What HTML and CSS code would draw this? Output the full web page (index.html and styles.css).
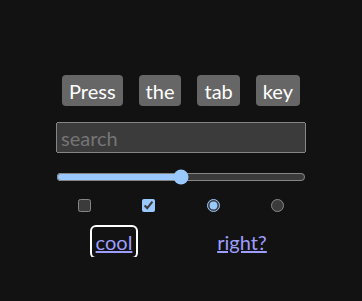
FILE: index.html
```html
<!DOCTYPE html>
<html lang="en">

<head>
    <meta charset="UTF-8">
    <meta name="viewport" content="width=device-width, initial-scale=1.0">
    <title>Tab order</title>
    <link rel="stylesheet" href="styles.css">
</head>

<body>
    <div class="page">
        <div class="keys">
            <button class="key">Press</button>
            <button class="key">the</button>
            <button class="key">tab</button>
            <button class="key">key</button>
        </div>
        <input class="search" type="text" placeholder="search">
        <input class="slider" type="range" min="0" max="100" value="50">
        <div class="checks">
            <input type="checkbox">
            <input type="checkbox" checked>
            <input type="radio" name="pick" checked>
            <input type="radio" name="pick">
        </div>
        <div class="links">
            <a href="#" class="focused">cool</a>
            <a href="#">right?</a>
        </div>
    </div>
</body>

</html>
```

FILE: styles.css
```css
body {
    margin: 0;
    background-color: #121212;
    color: #fff;
    font-family: Lato, "Noto Sans", sans-serif;
    color-scheme: dark;
}

.page {
    padding-top: 75px;
    display: flex;
    flex-direction: column;
    align-items: center;
}

.keys {
    display: flex;
    gap: 16px;
}

.key {
    height: 31px;
    padding: 0 7px;
    background-color: #666;
    color: #fff;
    border: none;
    border-radius: 4px;
    font-family: inherit;
    font-size: 20px;
}

.search {
    box-sizing: border-box;
    width: 250px;
    height: 31px;
    margin-top: 16px;
    padding: 0 3px;
    font-family: inherit;
    font-size: 20px;
}

.slider {
    width: 250px;
    height: 16px;
    margin: 16px 0 0;
}

.checks {
    display: grid;
    grid-template-columns: repeat(4, 64.5px);
    justify-items: center;
    margin-top: 14px;
}

.checks input {
    width: 13px;
    height: 13px;
    margin: 0;
}

.links {
    display: grid;
    grid-template-columns: 128px 128px;
    justify-items: center;
    margin-top: 15px;
    padding-right: 6px;
}

.links a {
    display: inline-block;
    padding: 3px 4px;
    line-height: 24px;
    font-size: 20px;
    color: #9e9eff;
}

.links a.focused {
    outline: 2px solid #fff;
    border-radius: 4px;
}
```
